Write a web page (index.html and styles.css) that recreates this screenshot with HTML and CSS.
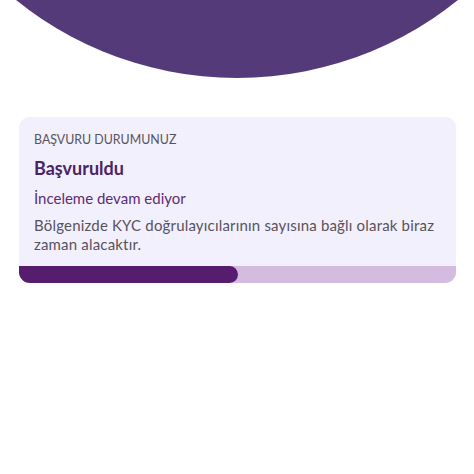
FILE: index.html
```html
<!DOCTYPE html>
<html lang="tr">
<head>
	<meta charset="UTF-8">
	<meta name="viewport" content="width=device-width, initial-scale=1.0">
	<title>Başvuru</title>
	<link rel="stylesheet" href="styles.css">
</head>
<body>
	<div class="header">
		<div class="headerCircle"></div>
	</div>
	<div class="statusCard">
		<div class="cardBody">
			<div class="label">BAŞVURU DURUMUNUZ</div>
			<div class="status">Başvuruldu</div>
			<div class="subStatus">İnceleme devam ediyor</div>
			<p class="note">Bölgenizde KYC doğrulayıcılarının sayısına bağlı olarak biraz zaman alacaktır.</p>
		</div>
		<div class="progress">
			<div class="progressFill" style="width: 50%"></div>
		</div>
	</div>
</body>
</html>
```

FILE: styles.css
```css
*{
	padding: 0;
	margin: 0;
	box-sizing: border-box;
}
body{
	background: #fff;
	font-family: Lato, "Noto Sans", sans-serif;
	width: 474px;
	overflow: hidden;
}
.header{
	height: 117px;
	position: relative;
	overflow: hidden;
}
.headerCircle{
	position: absolute;
	width: 704px;
	height: 704px;
	left: -115px;
	top: -626px;
	border-radius: 50%;
	background: #553a7a;
}
.statusCard{
	margin: 0 18px 0 19px;
	background: #f3f0fd;
	border-radius: 11px;
	overflow: hidden;
}
.cardBody{
	padding: 15px 15px 12px 15px;
}
.label{
	font-size: 12.4px;
	color: #58545e;
	line-height: 16px;
}
.status{
	margin-top: 9px;
	font-size: 18px;
	font-weight: bold;
	color: #4b2563;
	line-height: 22px;
}
.subStatus{
	margin-top: 9px;
	font-size: 15px;
	color: #5b2d72;
	line-height: 20px;
}
.note{
	margin-top: 8px;
	font-size: 15px;
	color: #57535c;
	line-height: 19px;
	letter-spacing: 0.18px;
}
.progress{
	height: 17px;
	background: #d3bcdf;
}
.progressFill{
	height: 100%;
	background: #561c6e;
	border-radius: 0 9px 9px 0;
}
```
